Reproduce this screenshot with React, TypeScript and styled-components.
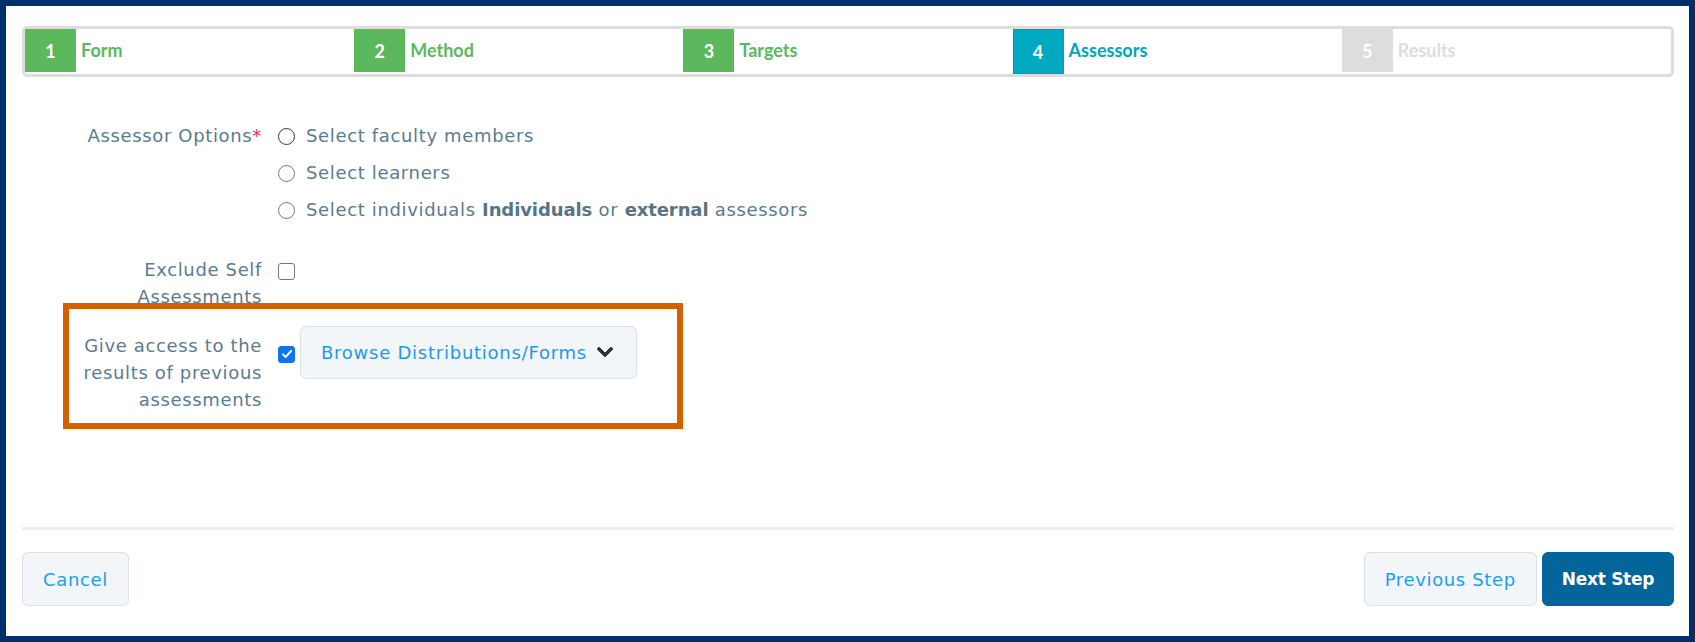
import React from "react";
import styled, { createGlobalStyle, css } from "styled-components";

const GlobalStyle = createGlobalStyle`
  html, body { margin: 0; padding: 0; background: #ffffff; }
  *, *::before, *::after { box-sizing: border-box; }
`;

const FONT = `"DejaVu Sans", "Noto Sans", sans-serif`;

const Frame = styled.div`
  height: 642px;
  border: 6px solid #002f6c;
  background: #ffffff;
  display: flex;
  flex-direction: column;
  padding: 20px 15px 30px 16px;
  font-family: ${FONT};
`;

type StepState = "done" | "active" | "todo";

const palette: Record<StepState, { box: string; text: string }> = {
  done: { box: "#5cb85c", text: "#5cb85c" },
  active: { box: "#00a9bf", text: "#00a5bf" },
  todo: { box: "#dddddd", text: "#dddddd" },
};

const Stepper = styled.ol`
  list-style: none;
  margin: 0;
  padding: 0;
  display: grid;
  grid-template-columns: repeat(5, 1fr);
  height: 51px;
  border: 3px solid #dddddd;
  border-radius: 5px;
`;

const Step = styled.li`
  display: flex;
  align-items: flex-start;
  gap: 5px;
  font-family: Lato, "Liberation Sans", sans-serif;
  font-weight: 700;
  font-size: 18px;
`;

const StepNum = styled.span<{ $state: StepState }>`
  width: 51px;
  height: 43px;
  display: flex;
  align-items: center;
  justify-content: center;
  color: #ffffff;
  background: ${(p) => palette[p.$state].box};
  ${(p) =>
    p.$state === "active" &&
    css`
      height: 45px;
      border: 1px solid #1a8ccc;
    `}
`;

const StepLabel = styled.span<{ $state: StepState }>`
  line-height: 43px;
  color: ${(p) => palette[p.$state].text};
`;

const FormArea = styled.div`
  flex: 1;
  padding: 45px 0 0 60px;
  color: #5b7b8e;
  font-size: 18px;
  line-height: 27px;
  letter-spacing: 0.65px;
`;

const Row = styled.div<{ $mt: number }>`
  position: relative;
  display: grid;
  grid-template-columns: 180px 1fr;
  column-gap: 16px;
  margin-top: ${(p) => p.$mt}px;
`;

const Label = styled.div<{ $pt?: number }>`
  text-align: right;
  padding-top: ${(p) => p.$pt ?? 0}px;
`;

const Req = styled.span`
  color: #e6334f;
`;

const Options = styled.div`
  display: flex;
  flex-direction: column;
  gap: 10px;
`;

const Option = styled.label`
  display: flex;
  align-items: flex-start;
  gap: 11px;
`;

const Radio = styled.span<{ $dark?: boolean }>`
  flex: none;
  width: 17px;
  height: 17px;
  margin-top: 6px;
  border-radius: 50%;
  border: 1.5px solid ${(p) => (p.$dark ? "#333333" : "#767676")};
  background: #ffffff;
`;

const Box = styled.span<{ $checked?: boolean; $mt: number }>`
  flex: none;
  width: 17px;
  height: 17px;
  margin-top: ${(p) => p.$mt}px;
  border-radius: 3px;
  display: flex;
  align-items: center;
  justify-content: center;
  ${(p) =>
    p.$checked
      ? css`
          background: #0b75f4;
          border: 1px solid #0b75f4;
        `
      : css`
          background: #ffffff;
          border: 1.5px solid #767676;
        `}
`;

const Controls = styled.div`
  display: flex;
  align-items: flex-start;
  gap: 5px;
`;

const Strong = styled.b`
  font-weight: 700;
  letter-spacing: -0.1px;
  color: #567486;
`;

const Highlight = styled.div`
  position: absolute;
  top: -23px;
  left: -19px;
  width: 620px;
  height: 126px;
  border: 6px solid #d45f00;
  pointer-events: none;
`;

const SoftButton = styled.button`
  height: 53px;
  display: inline-flex;
  align-items: center;
  gap: 10px;
  padding: 0 23px 0 20px;
  background: #f3f6f9;
  border: 1px solid #dbe1e7;
  border-radius: 6px;
  color: #1f98ea;
  font-family: ${FONT};
  font-size: 18px;
  letter-spacing: 0.75px;
  cursor: pointer;
`;

const Separator = styled.hr`
  height: 3px;
  margin: 0 0 22px 0;
  border: none;
  background: #eeeeee;
`;

const Footer = styled.div`
  display: flex;
  justify-content: space-between;
  align-items: center;
`;

const FooterGroup = styled.div`
  display: flex;
  gap: 5px;
`;

const FooterButton = styled.button<{ $primary?: boolean }>`
  height: 54px;
  padding: 0 20px;
  border-radius: 6px;
  font-family: ${FONT};
  cursor: pointer;
  ${(p) =>
    p.$primary
      ? css`
          background: #03659a;
          border: 1px solid #03659a;
          color: #ffffff;
          font-weight: 700;
          font-size: 17px;
          letter-spacing: -0.3px;
          padding: 0 19px;
        `
      : css`
          background: #f3f6f9;
          border: 1px solid #dbe1e7;
          color: #1f9cef;
          font-size: 18px;
          letter-spacing: 0.65px;
        `}
`;

const Chevron = () => (
  <svg width="16" height="18" viewBox="0 0 448 512" aria-hidden="true">
    <path
      fill="#333333"
      stroke="#333333"
      strokeWidth="28"
      strokeLinejoin="round"
      d="M207.029 381.476L12.686 187.132c-9.373-9.373-9.373-24.569 0-33.941l22.667-22.667c9.357-9.357 24.522-9.375 33.901-.04L224 284.505l154.745-154.021c9.379-9.335 24.544-9.317 33.901.04l22.667 22.667c9.373 9.373 9.373 24.569 0 33.941L240.971 381.476c-9.373 9.372-24.569 9.372-33.942 0z"
    />
  </svg>
);

const Check = () => (
  <svg width="12" height="12" viewBox="0 0 16 16" aria-hidden="true">
    <path d="M2.5 8.5l3.5 3.5 7.5-8" fill="none" stroke="#ffffff" strokeWidth="2.6" strokeLinecap="round" strokeLinejoin="round" />
  </svg>
);

const steps: { n: number; label: string; state: StepState }[] = [
  { n: 1, label: "Form", state: "done" },
  { n: 2, label: "Method", state: "done" },
  { n: 3, label: "Targets", state: "done" },
  { n: 4, label: "Assessors", state: "active" },
  { n: 5, label: "Results", state: "todo" },
];

export default function App() {
  return (
    <>
      <GlobalStyle />
      <Frame>
        <Stepper>
          {steps.map((s) => (
            <Step key={s.n}>
              <StepNum $state={s.state}>{s.n}</StepNum>
              <StepLabel $state={s.state}>{s.label}</StepLabel>
            </Step>
          ))}
        </Stepper>

        <FormArea>
          <Row $mt={0}>
            <Label>
              Assessor Options<Req>*</Req>
            </Label>
            <Options>
              <Option>
                <Radio $dark />
                <span>Select faculty members</span>
              </Option>
              <Option>
                <Radio />
                <span>Select learners</span>
              </Option>
              <Option>
                <Radio />
                <span>
                  Select individuals <Strong>Individuals</Strong> or <Strong>external</Strong> assessors
                </span>
              </Option>
            </Options>
          </Row>

          <Row $mt={33}>
            <Label>Exclude Self Assessments</Label>
            <Controls>
              <Box $mt={6.6} />
            </Controls>
          </Row>

          <Row $mt={15.6}>
            <Highlight />
            <Label $pt={6.3}>Give access to the results of previous assessments</Label>
            <Controls>
              <Box $checked $mt={20}>
                <Check />
              </Box>
              <SoftButton type="button">
                Browse Distributions/Forms
                <Chevron />
              </SoftButton>
            </Controls>
          </Row>
        </FormArea>

        <Separator />
        <Footer>
          <FooterButton type="button">Cancel</FooterButton>
          <FooterGroup>
            <FooterButton type="button">Previous Step</FooterButton>
            <FooterButton type="button" $primary>
              Next Step
            </FooterButton>
          </FooterGroup>
        </Footer>
      </Frame>
    </>
  );
}
